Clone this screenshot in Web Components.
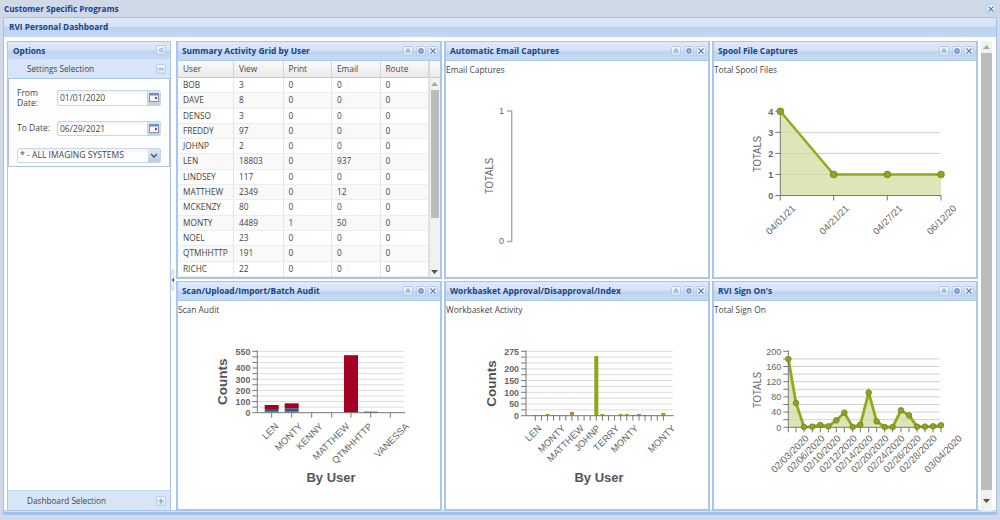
<!DOCTYPE html>
<html>
<head>
<meta charset="utf-8">
<title>RVI Personal Dashboard</title>
<style>
    html, body { margin: 0; height: 100%; overflow: hidden; background: #cfd9e7; }
    body { font-family: "Open Sans", "Liberation Sans", sans-serif; font-size: 9px; color: #444; }
    .grid { display: grid; grid-template-columns: repeat(3, 266px); grid-template-rows: 238px 230px; gap: 2px; }
</style>
</head>
<body>
<app-window>
    <rvi-panel slot="panel" heading="RVI Personal Dashboard">
        <options-panel></options-panel>
        <split-handle></split-handle>
        <div class="grid">
            <rvi-portlet heading="Summary Activity Grid by User"><activity-grid></activity-grid></rvi-portlet>
            <rvi-portlet heading="Automatic Email Captures" caption="Email Captures"><rvi-chart name="email"></rvi-chart></rvi-portlet>
            <rvi-portlet heading="Spool File Captures" caption="Total Spool Files"><rvi-chart name="spool"></rvi-chart></rvi-portlet>
            <rvi-portlet heading="Scan/Upload/Import/Batch Audit" caption="Scan Audit"><rvi-chart name="scan"></rvi-chart></rvi-portlet>
            <rvi-portlet heading="Workbasket Approval/Disapproval/Index" caption="Workbasket Activity"><rvi-chart name="basket"></rvi-chart></rvi-portlet>
            <rvi-portlet heading="RVI Sign On's" caption="Total Sign On"><rvi-chart name="signon"></rvi-chart></rvi-portlet>
        </div>
        <scroll-bar></scroll-bar>
    </rvi-panel>
</app-window>

<script>
const BLUE = '#15428b';

const ICONS = {
    up: '<path d="M2.500 5 5.500 2.500 8.500 5M2.500 8 5.500 5.500 8.500 8" fill="none" stroke="#5f88bb" stroke-width="1.300"/>',
    gear: '<circle cx="5.500" cy="5.500" r="4" fill="#7f9fca"/><circle cx="5.500" cy="5.500" r="1.500" fill="#a9c0de"/>',
    close: '<path d="M2 2 9 9M9 2 2 9" fill="none" stroke="#4f79ad" stroke-width="1.500"/>',
    collapse: '<path d="M6 2.500 3 5.500 6 8.500M9 2.500 6 5.500 9 8.500" fill="none" stroke="#6f97c8" stroke-width="1.200"/>',
    minus: '<path d="M2 5.500H9" stroke="#6f97c8" stroke-width="1.500"/>',
    plus: '<path d="M2 5.500H9M5.500 2V9" stroke="#6f97c8" stroke-width="1.500"/>'
};

class ToolButton extends HTMLElement {
    connectedCallback() {
        const shadow = this.attachShadow({ mode: 'open' });
        shadow.innerHTML = `
            <style>
                :host { display: block; width: 10px; height: 10px; border: 1px solid #b5cdee; border-radius: 2px;
                    background: linear-gradient(#f4f8fe, #d5e3f6); box-sizing: border-box; }
                svg { display: block; }
            </style>
            <svg width="8" height="8" viewBox="0 0 11 11">${ICONS[this.getAttribute('icon')]}</svg>`;
    }
}
customElements.define('tool-button', ToolButton);

class AppWindow extends HTMLElement {
    constructor() {
        super();
        this.attachShadow({ mode: 'open' }).innerHTML = `
            <style>
                :host { display: block; height: 520px; box-sizing: border-box; padding: 0 3px; }
                .top { height: 17px; display: flex; align-items: center; justify-content: space-between;
                    margin-left: 1px; padding-right: 1px; font-weight: 700; color: ${BLUE}; font-size: 8.200px; }
            </style>
            <div class="top"><span>Customer Specific Programs</span><tool-button icon="close"></tool-button></div>
            <slot name="panel"></slot>`;
    }
}
customElements.define('app-window', AppWindow);

class RviPanel extends HTMLElement {
    connectedCallback() {
        const shadow = this.attachShadow({ mode: 'open' });
        shadow.innerHTML = `
            <style>
                :host { display: block; border: 1px solid #a3c0e8; border-bottom-width: 3px; border-radius: 2px 2px 0 0; height: 498px; box-sizing: border-box; background: #d3e1f4; }
                .head { height: 19px; line-height: 18px; padding-left: 5px; font-weight: 700; color: ${BLUE}; font-size: 8.300px;
                    background: linear-gradient(#dde8f7 0, #d5e3f5 45%, #bcd3f0 50%, #c3d8f3 100%); box-sizing: border-box; }
                .body { display: flex; align-items: flex-start; background: #fff; height: 474px; padding: 4px 0 0 3px; box-sizing: border-box; border-bottom: 1px solid #b9cfee; }
            </style>
            <div class="head">${this.getAttribute('heading')}</div>
            <div class="body"><slot></slot></div>`;
    }
}
customElements.define('rvi-panel', RviPanel);

class RviPortlet extends HTMLElement {
    connectedCallback() {
        const caption = this.getAttribute('caption');
        const shadow = this.attachShadow({ mode: 'open' });
        shadow.innerHTML = `
            <style>
                :host { display: flex; flex-direction: column; border: 1px solid #a9c6ee; border-width: 1px 2px 2px; box-sizing: border-box; background: #fff; min-height: 0; }
                .head { flex: none; height: 19px; padding: 0 2px 1px 4px; display: flex; align-items: center; justify-content: space-between;
                    background: linear-gradient(#dfe9f8 0, #d6e4f6 45%, #bdd4f1 55%, #c7daf4 100%); border-bottom: 1px solid #a9c6ee; box-sizing: border-box; }
                .title { font-weight: 700; color: ${BLUE}; font-size: 8.400px; }
                .tools { display: flex; gap: 2.500px; }
                .body { flex: 1; min-height: 0; position: relative; overflow: hidden; }
                .caption { position: absolute; left: 0; top: 3px; font-size: 8.400px; color: #444; }
            </style>
            <div class="head"><span class="title">${this.getAttribute('heading')}</span>
                <span class="tools"><tool-button icon="up"></tool-button><tool-button icon="gear"></tool-button><tool-button icon="close"></tool-button></span></div>
            <div class="body">${caption ? `<div class="caption">${caption}</div>` : ''}<slot></slot></div>`;
    }
}
customElements.define('rvi-portlet', RviPortlet);

class DateField extends HTMLElement {
    connectedCallback() {
        const shadow = this.attachShadow({ mode: 'open' });
        shadow.innerHTML = `
            <style>
                :host { display: flex; align-items: center; font-size: 8.500px; color: #444; }
                .lbl { width: 40px; line-height: 10.500px; flex: none; }
                .box { width: 106px; height: 15.500px; display: flex; border: 1px solid #c9d6e6; border-radius: 2px; box-sizing: border-box;
                    background: linear-gradient(#eef2f7, #fff 35%); }
                .val { flex: 1; padding-left: 2px; line-height: 13.500px; }
                .btn { width: 12px; background: linear-gradient(#dce6f3, #c5cfdc); border-left: 1px solid #c9d6e6; }
                svg { display: block; margin: 2px 0 0 1px; }
            </style>
            <span class="lbl">${this.getAttribute('label')}</span>
            <div class="box"><span class="val">${this.getAttribute('value')}</span>
                <div class="btn"><svg width="10" height="9" viewBox="0 0 10 9"><rect x=".5" y=".5" width="9" height="8" fill="#f6f9fd" stroke="#7d94b3"/><rect x=".5" y=".5" width="9" height="2" fill="#6f8fb8"/><circle cx="7" cy="5" r="1.200" fill="#c2344a"/></svg></div></div>`;
    }
}
customElements.define('date-field', DateField);

class ComboField extends HTMLElement {
    connectedCallback() {
        const shadow = this.attachShadow({ mode: 'open' });
        shadow.innerHTML = `
            <style>
                :host { display: flex; height: 15.500px; border: 1px solid #c9d6e6; border-radius: 2px; box-sizing: border-box; font-size: 8.600px; background: linear-gradient(#eef2f7, #fff 35%); }
                span { flex: 1; padding-left: 2px; line-height: 13.500px; }
                .btn { flex: none; width: 12px; background: linear-gradient(#dfe7f2, #c0cad8); }
                svg { display: block; margin: 4px 0 0 2px; }
            </style>
            <span>${this.getAttribute('value')}</span>
            <div class="btn"><svg width="8" height="5" viewBox="0 0 8 5"><path d="M1 1 4 4 7 1" fill="none" stroke="#2c5a93" stroke-width="1.400"/></svg></div>`;
    }
}
customElements.define('combo-field', ComboField);

class AccordionBar extends HTMLElement {
    connectedCallback() {
        const shadow = this.attachShadow({ mode: 'open' });
        shadow.innerHTML = `
            <style>
                :host { display: flex; flex: none; align-items: center; justify-content: space-between; height: 19px; padding: 0 4px 0 19px;
                    background: #d8e5f7; box-sizing: border-box; font-size: 8.200px; color: #444; }
            </style>
            <span>${this.getAttribute('heading')}</span><tool-button icon="${this.getAttribute('icon')}"></tool-button>`;
    }
}
customElements.define('accordion-bar', AccordionBar);

class OptionsPanel extends HTMLElement {
    constructor() {
        super();
        this.attachShadow({ mode: 'open' }).innerHTML = `
            <style>
                :host { display: flex; flex-direction: column; flex: none; width: 164px; height: 470px; border: 1px solid #a9c6ee; box-sizing: border-box; }
                .head { flex: none; height: 17px; display: flex; align-items: center; justify-content: space-between; padding: 0 4px 1px 5px; box-sizing: border-box;
                    background: linear-gradient(#dfe9f8 0, #d6e4f6 45%, #bdd4f1 55%, #c7daf4 100%); font-weight: 700; color: ${BLUE}; font-size: 8.200px; }
                .form { flex: none; height: 89px; box-sizing: border-box; border: 1px solid #a9c6ee; padding: 8.500px 8px 0; display: flex; flex-direction: column; }
                date-field + date-field { margin-top: 12px; }
                combo-field { margin-top: 11.500px; }
                .rest { flex: 1; border-bottom: 1px solid #c3d6f0; }
            </style>
            <div class="head"><span>Options</span><tool-button icon="collapse"></tool-button></div>
            <accordion-bar heading="Settings Selection" icon="minus"></accordion-bar>
            <div class="form">
                <date-field label="From Date:" value="01/01/2020"></date-field>
                <date-field label="To Date:" value="06/29/2021"></date-field>
                <combo-field value="* - ALL IMAGING SYSTEMS"></combo-field>
            </div>
            <div class="rest"></div>
            <accordion-bar heading="Dashboard Selection" icon="plus"></accordion-bar>`;
    }
}
customElements.define('options-panel', OptionsPanel);

class SplitHandle extends HTMLElement {
    constructor() {
        super();
        this.attachShadow({ mode: 'open' }).innerHTML = `
            <style>
                :host { display: flex; flex: none; width: 5px; height: 470px; align-items: center; }
                svg { display: block; margin-top: 7px; }
            </style>
            <svg width="5" height="22" viewBox="0 0 5 22"><rect x="0" y="0" width="4" height="22" rx="1" fill="#e6e9ee"/><path d="M3 9 1 11 3 13Z" fill="#333"/></svg>`;
    }
}
customElements.define('split-handle', SplitHandle);

class ScrollBar extends HTMLElement {
    constructor() {
        super();
        this.attachShadow({ mode: 'open' }).innerHTML = `
            <style>
                :host { display: flex; flex-direction: column; flex: none; width: 11px; height: 470px; margin-left: 3px; background: #f1f1f1; }
                .btn { flex: none; height: 12px; display: flex; align-items: center; justify-content: center; }
                .thumb { flex: 1; background: #bcbcbc; }
                svg { display: block; }
            </style>
            <div class="btn"><svg width="7" height="4"><path d="M3.500 0 7 4H0Z" fill="#a6a6a6"/></svg></div>
            <div class="thumb"></div>
            <div class="btn" style="height:21px"><svg width="7" height="4"><path d="M0 0H7L3.500 4Z" fill="#505050"/></svg></div>`;
    }
}
customElements.define('scroll-bar', ScrollBar);

const GRID_ROWS = [
    ['BOB', 3, 0, 0, 0], ['DAVE', 8, 0, 0, 0], ['DENSO', 3, 0, 0, 0], ['FREDDY', 97, 0, 0, 0],
    ['JOHNP', 2, 0, 0, 0], ['LEN', 18803, 0, 937, 0], ['LINDSEY', 117, 0, 0, 0], ['MATTHEW', 2349, 0, 12, 0],
    ['MCKENZY', 80, 0, 0, 0], ['MONTY', 4489, 1, 50, 0], ['NOEL', 23, 0, 0, 0], ['QTMHHTTP', 191, 0, 0, 0], ['RICHC', 22, 0, 0, 0]
];

class ActivityGrid extends HTMLElement {
    connectedCallback() {
        const cols = ['User', 'View', 'Print', 'Email', 'Route'];
        const shadow = this.attachShadow({ mode: 'open' });
        shadow.innerHTML = `
            <style>
                :host { display: grid; grid-template-columns: 56px 49.500px 48.500px 48.500px 48px 1fr; grid-template-rows: 17px repeat(13, 15.300px) 1fr; height: 217px; overflow: hidden; font-size: 8.300px; color: #444; position: relative; }
                .hd { background: linear-gradient(#fbfbfb, #e9e9e9); border-bottom: 1px solid #c8c8c8; border-right: 1px solid #d4d4d4; box-sizing: border-box; padding-left: 5px; line-height: 16px; }
                .c { padding-left: 5px; line-height: 14.300px; border-bottom: 1px solid #ededed; border-right: 1px solid #e4e4e4; box-sizing: border-box; }
                .alt { background: #f9f9f9; }
                .head { display: contents; }
                .row { display: contents; }
                .bar { grid-column: 6; grid-row: 1 / -1; display: flex; flex-direction: column; background: #f1f1f1; border-left: 1px solid #ddd; }
                .sp { height: 17px; flex: none; background: linear-gradient(#fbfbfb, #e9e9e9); border-bottom: 1px solid #c8c8c8; box-sizing: border-box; }
                .arr { flex: none; height: 12px; display: flex; align-items: center; justify-content: center; }
                .thumb { height: 128px; flex: none; background: #bcbcbc; margin: 0 1px; }
                .gap { flex: 1; }
                svg { display: block; }
            </style>
            <div class="head">${cols.map(c => `<div class="hd" style="grid-row:1">${c}</div>`).join('')}</div>
            <div class="bar"><div class="sp"></div>
                <div class="arr"><svg width="7" height="4"><path d="M3.500 0 7 4H0Z" fill="#a6a6a6"/></svg></div>
                <div class="thumb"></div><div class="gap"></div>
                <div class="arr"><svg width="7" height="4"><path d="M0 0H7L3.500 4Z" fill="#505050"/></svg></div></div>
            ${GRID_ROWS.map((r, i) => `<div class="row">${r.map(v => `<div class="c ${i % 2 ? 'alt' : ''}" style="grid-row:${i + 2}">${v}</div>`).join('')}</div>`).join('')}`;
    }
}
customElements.define('activity-grid', ActivityGrid);

const range = (from, to, step) => {
    const out = [];
    for (let v = from; v <= to; v += step) out.push(v);
    return out;
};

// chart coordinates are page pixels: each svg gets a viewBox on its own portlet body
const CHARTS = {
    email: { view: [445, 61], size: [264, 216], type: 'email' },
    spool: {
        view: [713, 61], size: [264, 216], type: 'line', axisX: 779.300, axisY: 195.500, yTop: 111.300, yMax: 4, gridRight: 939,
        grid: range(1, 3, 1), yTicks: range(0, 4, 1), yLabels: range(0, 4, 1), boldTicks: true,
        pts: [[779.300, 4], [832.700, 1], [886.300, 1], [940, 1]], ticks: [779.300, 832.700, 886.300, 940], r: 3.400, sw: 2.400,
        labels: [['04/01/21', 795], ['04/21/21', 848.500], ['04/27/21', 902], ['06/12/20', 956]], labelY: 207, fs: 9.500, yTitle: ['TOTALS', 760, 154, 10.500]
    },
    scan: {
        view: [178, 301], size: [264, 210], type: 'bar', axisX: 257.300, axisY: 412.700, yTop: 351.300, yMax: 550, gridRight: 404,
        grid: range(50, 550, 50), yTicks: range(0, 550, 50), yLabels: [0, 100, 200, 300, 400, 550], barW: 14,
        ticks: [271.700, 291.700, 311.700, 331.700, 351, 370.700, 390.300],
        bars: [[[9, '#8fa812'], [24, '#1f5a96'], [36, '#a30022']], [[9, '#8fa812'], [30, '#1f5a96'], [45, '#a30022']], [], [], [[515, '#a30022']], [[9, '#a30022']], []],
        labels: [['LEN', 279], ['MONTY', 303], ['KENNY', 323.500], ['MATTHEW', 350], ['QTMHHTTP', 373], ['VANESSA', 409.500]], labelY: 425, fs: 9.500, boldY: true,
        yTitle: ['Counts', 226.500, 381.700, 13.500, true], xTitle: ['By User', 331, 482]
    },
    basket: {
        view: [445, 301], size: [264, 210], type: 'bar', axisX: 525, axisY: 415.700, yTop: 351.300, yMax: 275, gridRight: 671.700,
        grid: range(25, 275, 25), yTicks: range(0, 275, 25), yLabels: [0, 50, 100, 150, 200, 275], barW: 4,
        ticks: range(0, 21, 1).map(i => 445 + (268 + i * 18.290) / 3),
        bars: [[[3, '#a30022']], [[3, '#8fa812']], [[7, '#8fa812']], [[3, '#a30022']], [[3, '#8fa812']], [[3, '#8fa812']], [[10, '#8fa812'], [4, '#a30022']], [], [[3, '#8fa812']], [],
            [[255, '#8fa812']], [[7, '#8fa812']], [[3, '#8fa812']], [], [[7, '#8fa812']], [[7, '#8fa812']], [[3, '#a30022']], [[4, '#8fa812'], [3, '#c03050']], [[3, '#a30022']], [[3, '#8fa812']], [], [[12, '#8fa812']]],
        labels: [['LEN', 541], ['MONTY', 565], ['MATTHEW', 583.500], ['JOHNP', 600], ['TERRY', 619], ['MONTY', 638], ['MONTY', 675]], labelY: 427, fs: 9.500, boldY: true,
        yTitle: ['Counts', 494.500, 383.500, 13.500, true], xTitle: ['By User', 598, 482]
    },
    signon: {
        view: [713, 301], size: [264, 210], type: 'line', axisX: 787.300, axisY: 427.300, yTop: 351.300, yMax: 200, gridRight: 939,
        grid: range(20, 180, 20), yTicks: range(0, 200, 20), yLabels: range(0, 200, 40), r: 2.800, sw: 2.800,
        ticks: [217, 240, 264, 289, 313, 337, 361, 385, 410, 433, 458, 482, 506, 530, 555, 579, 603, 627, 651, 675].map(v => 715 + v / 3),
        rawY: [57, 189, 261, 260, 255, 259, 241, 218, 261, 254, 158, 244, 261, 261, 211, 226, 260, 260, 259, 256].map(v => 340 + v / 3),
        labels: [[280, '02/03/2020'], [328, '02/06/2020'], [376, '02/10/2020'], [425, '02/12/2020'], [472, '02/14/2020'], [520, '02/20/2020'], [568, '02/24/2020'], [617, '02/26/2020'], [665, '02/28/2020'], [740, '03/04/2020']].map(([x, t]) => [t, 715 + x / 3]),
        labelY: 437, fs: 9.700, yTitle: ['TOTALS', 760, 390, 10.500]
    }
};

class RviChart extends HTMLElement {
    connectedCallback() {
        const c = CHARTS[this.getAttribute('name')];
        const shadow = this.attachShadow({ mode: 'open' });
        shadow.innerHTML = `
            <style>
                :host { display: block; }
                svg { display: block; }
                text { font-family: "Liberation Sans", Arial, sans-serif; fill: #666; }
            </style>
            <svg width="${c.size[0]}" height="${c.size[1]}" viewBox="${c.view[0]} ${c.view[1]} ${c.size[0]} ${c.size[1]}">${this.draw(c)}</svg>`;
    }

    draw(c) {
        if (c.type === 'email') {
            return `<path d="M506 111H510.700V241.500H506" fill="none" stroke="#aaa" stroke-width="1.400"/>
                <text x="503" y="114" font-size="9" text-anchor="end">1</text>
                <text x="503" y="244" font-size="9" text-anchor="end">0</text>
                <text transform="translate(492 176) rotate(-90)" font-size="10.500" textLength="36" lengthAdjust="spacingAndGlyphs" text-anchor="middle">TOTALS</text>`;
        }
        const y = v => c.axisY - (v / c.yMax) * (c.axisY - c.yTop);
        let out = '';
        const gridColor = c.type === 'bar' ? '#dcdcdc' : '#cfcfcf';
        c.grid.forEach(v => { out += `<path d="M${c.axisX} ${y(v)}H${c.gridRight}" stroke="${gridColor}" stroke-width="1"/>`; });

        if (c.type === 'line') {
            const pts = c.pts ? c.pts.map(p => [p[0], y(p[1])]) : c.ticks.map((x, i) => [x, c.rawY[i]]);
            const line = pts.map(p => p.join(' ')).join(' L');
            out += `<path d="M${pts[0][0]} ${c.axisY} L${line} L${pts[pts.length - 1][0]} ${c.axisY}Z" fill="#cfdc9a" fill-opacity=".7"/>`;
            out += `<path d="M${line}" fill="none" stroke="#94a91a" stroke-width="${c.sw}"/>`;
            this.axes = pts.map(p => `<circle cx="${p[0]}" cy="${p[1]}" r="${c.r}" fill="#8fa61c" stroke="#6e7f2c" stroke-width=".8"/>`).join('');
        } else {
            c.bars.forEach((stack, i) => {
                let base = 0;
                stack.forEach(([v, color]) => {
                    out += `<rect x="${c.ticks[i] - c.barW / 2}" y="${y(base + v)}" width="${c.barW}" height="${y(base) - y(base + v)}" fill="${color}"/>`;
                    base += v;
                });
            });
            this.axes = '';
        }

        const axis = '#777';
        out += `<path d="M${c.axisX} ${c.yTop - 1}V${c.axisY}H${c.gridRight + 1}" fill="none" stroke="${axis}" stroke-width="1"/>`;
        c.yTicks.forEach(v => { out += `<path d="M${c.axisX - 5} ${y(v)}H${c.axisX}" stroke="${axis}" stroke-width="1"/>`; });
        c.ticks.forEach(x => { out += `<path d="M${x} ${c.axisY}v5" stroke="${axis}" stroke-width="1"/>`; });
        out += this.axes;

        const bold = c.boldY || c.boldTicks;
        c.yLabels.forEach(v => {
            out += `<text x="${c.axisX - 7}" y="${y(v) + 3.300}" font-size="${c.boldY ? 8.800 : 9}" font-weight="${bold ? 700 : 400}" text-anchor="end">${v}</text>`;
        });
        c.labels.forEach(([t, x]) => {
            out += `<text transform="translate(${x} ${c.labelY + 2}) rotate(-45)" font-size="${c.fs}" text-anchor="end">${t}</text>`;
        });
        const [yt, yx, yy, ys, yb] = c.yTitle;
        const fit = yb ? '' : 'textLength="36" lengthAdjust="spacingAndGlyphs"';
        out += `<text transform="translate(${yx} ${yy}) rotate(-90)" font-size="${ys}" font-weight="${yb ? 700 : 400}" ${fit} text-anchor="middle" style="${yb ? 'fill:#555' : ''}">${yt}</text>`;
        if (c.xTitle) {
            out += `<text x="${c.xTitle[1]}" y="${c.xTitle[2]}" font-size="13" font-weight="700" text-anchor="middle" style="fill:#555">${c.xTitle[0]}</text>`;
        }
        return out;
    }
}
customElements.define('rvi-chart', RviChart);
</script>
</body>
</html>
